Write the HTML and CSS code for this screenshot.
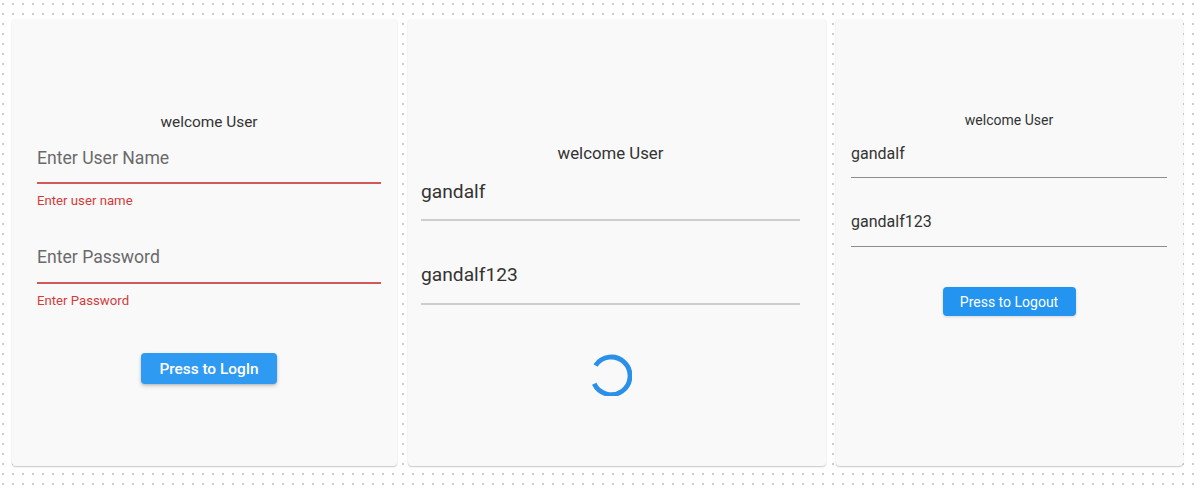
FILE: index.html
```html
<!DOCTYPE html>
<html>
<head>
<meta charset="utf-8">
<link rel="stylesheet" href="styles.css">
</head>
<body>
<div class="row">
  <section class="card card-login">
    <div class="welcome">welcome User</div>
    <div class="field">
      <div class="input hint">Enter User Name</div>
      <div class="error">Enter user name</div>
    </div>
    <div class="field field-2">
      <div class="input hint">Enter Password</div>
      <div class="error">Enter Password</div>
    </div>
    <button class="btn">Press to LogIn</button>
  </section>

  <section class="card card-loading">
    <div class="welcome">welcome User</div>
    <div class="field">
      <div class="input">gandalf</div>
    </div>
    <div class="field field-2">
      <div class="input">gandalf123</div>
    </div>
    <svg class="spinner" viewBox="0 0 43 43" width="43" height="43">
      <path d="M6.5 12.5 A18.8 18.8 0 1 1 5.2 30.8" fill="none" stroke="#2a90e8" stroke-width="4.8" stroke-linecap="butt"/>
    </svg>
  </section>

  <section class="card card-done">
    <div class="welcome">welcome User</div>
    <div class="field">
      <div class="input">gandalf</div>
    </div>
    <div class="field field-2">
      <div class="input">gandalf123</div>
    </div>
    <button class="btn">Press to Logout</button>
  </section>
</div>
</body>
</html>
```

FILE: styles.css
```css
html, body {
  margin: 0;
  padding: 0;
}
body {
  width: 1200px;
  height: 492px;
  background-color: #ffffff;
  background-image: radial-gradient(circle, #cdcdcd 0.9px, transparent 1.3px);
  background-size: 10px 10px;
  background-position: -2px -1px;
  font-family: Roboto, "Liberation Sans", Arial, sans-serif;
  color: #303030;
}
.row {
  display: flex;
  gap: 11px;
  padding: 19px 0 0 12px;
}
.card {
  box-sizing: border-box;
  flex: none;
  height: 447px;
  background: #f9f9f9;
  border-radius: 4px;
  box-shadow: 0 1px 1.5px rgba(0, 0, 0, 0.22), 0 0 1px rgba(0, 0, 0, 0.06);
  display: flex;
  flex-direction: column;
}
.welcome {
  text-align: center;
  color: #333;
}
.input {
  color: #333;
}
.hint {
  color: #6a6a6a;
}
.btn {
  align-self: center;
  border: none;
  border-radius: 4px;
  color: #fff;
  font-family: Roboto, "Liberation Sans", Arial, sans-serif;
  padding: 0;
  cursor: pointer;
}

/* Card 1: login with errors */
.card-login {
  width: 385px;
  padding: 94px 16px 0 25px;
}
.card-login .welcome {
  font-size: 15.4px;
  line-height: 18px;
}
.card-login .field {
  margin-top: 17px;
}
.card-login .field-2 {
  margin-top: 39px;
}
.card-login .input {
  font-size: 17.6px;
  line-height: 21px;
  padding-bottom: 13px;
  border-bottom: 2px solid #d05a5a;
}
.card-login .field-2 .input {
  padding-bottom: 14px;
}
.card-login .error {
  margin-top: 9px;
  font-size: 13.2px;
  line-height: 15px;
  color: #d23c3c;
}
.card-login .btn {
  margin-top: 45px;
  width: 136px;
  height: 31px;
  background: #2f9af2;
  font-size: 15.4px;
  font-weight: 500;
  box-shadow: 0 2px 4px rgba(0, 0, 0, 0.18), 0 1px 2px rgba(0, 0, 0, 0.12);
}

/* Card 2: loading */
.card-loading {
  width: 418px;
  padding: 124px 26px 0 13px;
}
.card-loading .welcome {
  font-size: 16.8px;
  line-height: 20px;
}
.card-loading .field {
  margin-top: 17px;
}
.card-loading .field-2 {
  margin-top: 42px;
}
.card-loading .input {
  font-size: 19.2px;
  line-height: 23px;
  padding-bottom: 16px;
  border-bottom: 2px solid #cdcdcd;
}
.card-loading .field-2 .input {
  padding-bottom: 17px;
}
.spinner {
  align-self: center;
  margin-top: 48px;
}

/* Card 3: logged in */
.card-done {
  width: 347px;
  padding: 93px 16px 0 15px;
  margin-left: -1px;
}
.card-done .welcome {
  font-size: 14px;
  line-height: 16px;
}
.card-done .field {
  margin-top: 16px;
}
.card-done .field-2 {
  margin-top: 34px;
}
.card-done .input {
  font-size: 16px;
  line-height: 19px;
  padding-bottom: 14px;
  border-bottom: 1.5px solid #8c8c8c;
}
.card-done .field-2 .input {
  padding-bottom: 15px;
}
.card-done .btn {
  margin-top: 40px;
  width: 133px;
  height: 29px;
  background: #2394f0;
  font-size: 14px;
  font-weight: 400;
  box-shadow: 0 1px 3px rgba(0, 0, 0, 0.15);
}
```
